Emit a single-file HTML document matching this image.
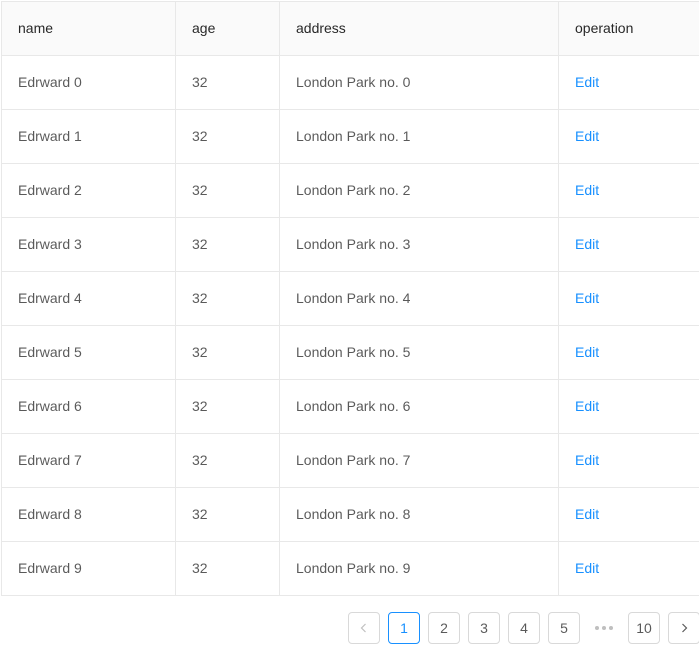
<!DOCTYPE html>
<html><head><style>
body{margin:0;width:699px;height:659px;background:#fff;font-family:"Liberation Sans",sans-serif;font-size:14px;position:relative;overflow:hidden}
.t{position:absolute;left:1px;top:1px;width:740px;border-top:1px solid #e8e8e8;border-left:1px solid #e8e8e8}
.r{display:flex;height:53px;border-bottom:1px solid #e8e8e8;color:rgba(0,0,0,.65)}
.r.h{background:#fafafa;color:rgba(0,0,0,.85)}
.c{box-sizing:border-box;padding-left:16px;line-height:53px;border-right:1px solid #e8e8e8}
.c1{width:174px}.c2{width:104px}.c3{width:279px}.c4{width:182px;border-right:none}
a{color:#1890ff;text-decoration:none}
.p{position:absolute;top:612px;width:32px;height:32px;box-sizing:border-box;border:1px solid #d9d9d9;border-radius:4px;text-align:center;line-height:30px;color:rgba(0,0,0,.65)}
</style></head><body>
<div class="t">
<div class="r h"><div class="c c1">name</div><div class="c c2">age</div><div class="c c3">address</div><div class="c c4">operation</div></div>
<div class="r"><div class="c c1">Edrward 0</div><div class="c c2">32</div><div class="c c3">London Park no. 0</div><div class="c c4"><a>Edit</a></div></div>
<div class="r"><div class="c c1">Edrward 1</div><div class="c c2">32</div><div class="c c3">London Park no. 1</div><div class="c c4"><a>Edit</a></div></div>
<div class="r"><div class="c c1">Edrward 2</div><div class="c c2">32</div><div class="c c3">London Park no. 2</div><div class="c c4"><a>Edit</a></div></div>
<div class="r"><div class="c c1">Edrward 3</div><div class="c c2">32</div><div class="c c3">London Park no. 3</div><div class="c c4"><a>Edit</a></div></div>
<div class="r"><div class="c c1">Edrward 4</div><div class="c c2">32</div><div class="c c3">London Park no. 4</div><div class="c c4"><a>Edit</a></div></div>
<div class="r"><div class="c c1">Edrward 5</div><div class="c c2">32</div><div class="c c3">London Park no. 5</div><div class="c c4"><a>Edit</a></div></div>
<div class="r"><div class="c c1">Edrward 6</div><div class="c c2">32</div><div class="c c3">London Park no. 6</div><div class="c c4"><a>Edit</a></div></div>
<div class="r"><div class="c c1">Edrward 7</div><div class="c c2">32</div><div class="c c3">London Park no. 7</div><div class="c c4"><a>Edit</a></div></div>
<div class="r"><div class="c c1">Edrward 8</div><div class="c c2">32</div><div class="c c3">London Park no. 8</div><div class="c c4"><a>Edit</a></div></div>
<div class="r"><div class="c c1">Edrward 9</div><div class="c c2">32</div><div class="c c3">London Park no. 9</div><div class="c c4"><a>Edit</a></div></div>
</div>
<div class="p" style="left:348px"><svg width="12" height="12" viewBox="0 0 12 12" style="margin-top:9px"><path d="M7.5 2 L3.5 6 L7.5 10" fill="none" stroke="rgba(0,0,0,.25)" stroke-width="1.2"/></svg></div>
<div class="p" style="left:388px;border-color:#1890ff;color:#1890ff">1</div>
<div class="p" style="left:428px">2</div>
<div class="p" style="left:468px">3</div>
<div class="p" style="left:508px">4</div>
<div class="p" style="left:548px">5</div>
<svg style="position:absolute;left:588px;top:612px" width="32" height="32"><circle cx="9" cy="16" r="2" fill="#bfbfbf"/><circle cx="16" cy="16" r="2" fill="#bfbfbf"/><circle cx="23" cy="16" r="2" fill="#bfbfbf"/></svg>
<div class="p" style="left:628px">10</div>
<div class="p" style="left:668px"><svg width="12" height="12" viewBox="0 0 12 12" style="margin-top:9px"><path d="M4.5 2 L8.5 6 L4.5 10" fill="none" stroke="rgba(0,0,0,.65)" stroke-width="1.2"/></svg></div>
</body></html>
